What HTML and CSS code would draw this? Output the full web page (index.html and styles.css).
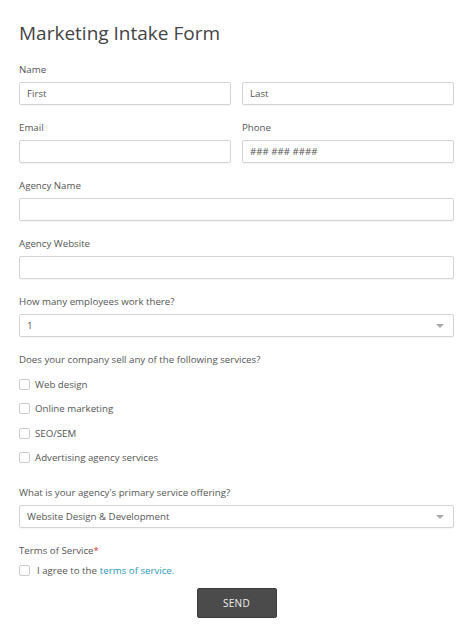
FILE: index.html
```html
<!doctype html>
<html>
    <head>
        <title>Marketing Intake Form</title>
        <meta charset="UTF-8">
        <meta name="viewport" content="width=device-width, initial-scale=1">
        <link rel="stylesheet" href="styles.css">
    </head>
    <body>
        <form class="intake">
            <h1>Marketing Intake Form</h1>

            <div class="field">
                <label>Name</label>
                <div class="pair">
                    <input type="text" placeholder="First">
                    <input type="text" placeholder="Last">
                </div>
            </div>

            <div class="pair">
                <div class="field">
                    <label>Email</label>
                    <input type="text">
                </div>
                <div class="field">
                    <label>Phone</label>
                    <input type="text" placeholder="### ### ####">
                </div>
            </div>

            <div class="field">
                <label>Agency Name</label>
                <input type="text">
            </div>

            <div class="field">
                <label>Agency Website</label>
                <input type="text">
            </div>

            <div class="field">
                <label>How many employees work there?</label>
                <span class="dropdown">
                    <select>
                        <option>1</option>
                        <option>2-10</option>
                        <option>11-50</option>
                        <option>50+</option>
                    </select>
                </span>
            </div>

            <div class="field">
                <label>Does your company sell any of the following services?</label>
                <ul class="choices">
                    <li><input type="checkbox"> Web design</li>
                    <li><input type="checkbox"> Online marketing</li>
                    <li><input type="checkbox"> SEO/SEM</li>
                    <li><input type="checkbox"> Advertising agency services</li>
                </ul>
            </div>

            <div class="field">
                <label>What is your agency's primary service offering?</label>
                <span class="dropdown">
                    <select>
                        <option>Website Design &amp; Development</option>
                        <option>Online Marketing</option>
                        <option>SEO/SEM</option>
                    </select>
                </span>
            </div>

            <div class="field terms">
                <label>Terms of Service<b>*</b></label>
                <div class="agree"><input type="checkbox"> I agree to the <a href="#">terms of service.</a></div>
            </div>

            <div class="actions">
                <button type="submit">SEND</button>
            </div>
        </form>
    </body>
</html>
```

FILE: styles.css
```css
body {
    margin: 0;
    background: #fff;
    font-family: "Open Sans", sans-serif;
    color: #444;
}

.intake {
    padding: 18px 20px 20px 19px;
}

h1 {
    margin: 0 0 14px 0;
    font-size: 19px;
    font-weight: normal;
    line-height: 30px;
    color: #444;
}

.field {
    margin-bottom: 15px;
}

.pair .field {
    margin-bottom: 0;
}

.field > .pair,
.pair {
    display: grid;
    grid-template-columns: 1fr 1fr;
    column-gap: 11px;
}

.pair {
    margin-bottom: 15px;
}

.field > .pair {
    margin-bottom: 0;
}

label {
    display: block;
    font-size: 9.7px;
    line-height: 16px;
    margin-bottom: 4px;
    color: #555;
}

label b {
    color: #d33;
    font-weight: normal;
}

input[type="text"],
select {
    display: block;
    box-sizing: border-box;
    width: 100%;
    height: 23px;
    margin: 0;
    padding: 0 7px;
    border: 1px solid #d4d4d4;
    border-radius: 2px;
    background: #fff;
    font-family: "Open Sans", sans-serif;
    font-size: 9.7px;
    color: #555;
    box-shadow: 0 1px 1px rgba(0, 0, 0, 0.04);
}

input::placeholder {
    color: #555;
}

select {
    -webkit-appearance: none;
    appearance: none;
}

.dropdown {
    display: block;
    position: relative;
}

.dropdown::after {
    content: "";
    position: absolute;
    right: 10px;
    top: 10px;
    border-left: 4px solid transparent;
    border-right: 4px solid transparent;
    border-top: 4px solid #aaa;
}

.choices {
    list-style: none;
    margin: 0;
    padding: 0;
}

.choices li,
.agree {
    display: flex;
    align-items: center;
    height: 24.5px;
    font-size: 9.7px;
    color: #555;
}

input[type="checkbox"] {
    -webkit-appearance: none;
    appearance: none;
    box-sizing: border-box;
    width: 11px;
    height: 11px;
    margin: 0 5px 0 0;
    border: 1px solid #ccc;
    border-radius: 2px;
    background: #fff;
}

.terms label {
    margin-bottom: 0;
}

.agree {
    height: 22px;
}

.agree input[type="checkbox"] {
    margin-right: 7px;
}

.agree a {
    color: #2a98b3;
    text-decoration: none;
    margin-left: 3px;
}

.actions {
    display: flex;
    justify-content: center;
    margin-top: -8px;
}

button {
    width: 80px;
    height: 30px;
    border: 1px solid #3c3c3c;
    border-radius: 2px;
    background: #4b4b4b;
    color: #eee;
    font-family: "Open Sans", sans-serif;
    font-size: 10px;
    letter-spacing: 0.3px;
}
```
